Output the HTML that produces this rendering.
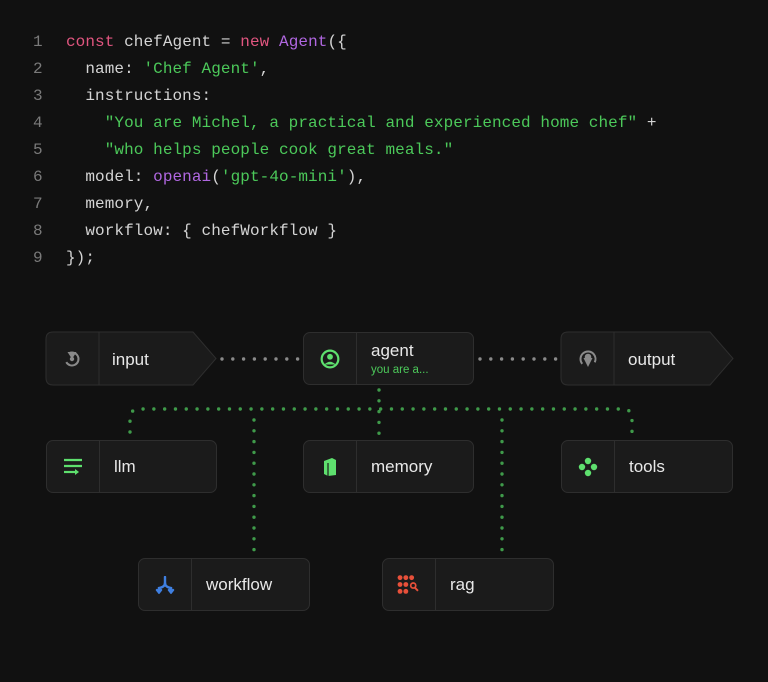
<!DOCTYPE html>
<html><head><meta charset="utf-8"><style>
*{margin:0;padding:0;box-sizing:border-box}
body{width:768px;height:682px;background:#111111;overflow:hidden;position:relative;font-family:"Liberation Sans",sans-serif}
.code{position:absolute;left:0;top:29px;font-family:"Liberation Mono",monospace;font-size:16px;letter-spacing:0.08px;line-height:27px;color:#d4d4d4;white-space:pre}
.ln{display:inline-block;width:66px;padding-left:33px;color:#7a7a7a}
.k{color:#e0557f}.f{color:#b067e0}.s{color:#4cc95a}
.node{position:absolute;height:53px;border:1px solid #2e2e2e;border-radius:7px;background:#1b1b1b;color:#e8e8e8;font-size:17px}
.node .ic{position:absolute;left:0;top:0;width:53px;height:100%;border-right:1px solid #2e2e2e;display:flex;align-items:center;justify-content:center}
.node .lb{position:absolute;left:67px;top:16px}
svg.l{position:absolute;left:0;top:0}
</style></head><body>
<div class="code"><span class="ln">1</span><span class="k">const</span> chefAgent = <span class="k">new</span> <span class="f">Agent</span>({
<span class="ln">2</span>  name: <span class="s">'Chef Agent'</span>,
<span class="ln">3</span>  instructions:
<span class="ln">4</span>    <span class="s">"You are Michel, a practical and experienced home chef"</span> +
<span class="ln">5</span>    <span class="s">"who helps people cook great meals."</span>
<span class="ln">6</span>  model: <span class="f">openai</span>(<span class="s">'gpt-4o-mini'</span>),
<span class="ln">7</span>  memory,
<span class="ln">8</span>  workflow: { chefWorkflow }
<span class="ln">9</span>});</div>

<svg class="l" width="768" height="682">
<g fill="none" stroke-linecap="round" stroke-width="3.4" stroke-dasharray="0 10.8">
<path d="M222 359 H298" stroke="#8a8a8a"/>
<path d="M480 359 H556" stroke="#8a8a8a"/>
<path d="M379 390 V438" stroke="#3f9a4a"/>
<path d="M130 432 V418 Q130 409 140 409 H622 Q632 409 632 418 V434" stroke="#3f9a4a"/>
<path d="M254 420 V556" stroke="#3f9a4a"/>
<path d="M502 420 V556" stroke="#3f9a4a"/>
</g>
<path d="M53 332 H193 L216 358.5 L193 385 H53 Q46 385 46 378 V339 Q46 332 53 332Z" fill="#1b1b1b" stroke="#2e2e2e"/>
<path d="M568 332 H710 L733 358.5 L710 385 H568 Q561 385 561 378 V339 Q561 332 568 332Z" fill="#1b1b1b" stroke="#2e2e2e"/>
<line x1="99" y1="332" x2="99" y2="385" stroke="#2e2e2e"/>
<line x1="614" y1="332" x2="614" y2="385" stroke="#2e2e2e"/>
<g transform="translate(72,359)"><circle r="6.5" fill="none" stroke="#8a8a8a" stroke-width="2" stroke-dasharray="30 11" transform="rotate(-115)"/><path d="M-4.5 -7 L4.5 -7 L0 0Z" fill="#8a8a8a"/><circle r="2.2" fill="#8a8a8a"/></g>
<g transform="translate(588,359)"><circle r="7.5" fill="none" stroke="#8a8a8a" stroke-width="2" stroke-dasharray="32 15" transform="rotate(140)"/><path d="M-4.5 -1 L4.5 -1 L0 8Z" fill="#8a8a8a"/><circle cy="-2" r="3.3" fill="#8a8a8a"/></g>
<text x="112" y="365" fill="#e8e8e8" font-size="17" font-family="Liberation Sans">input</text>
<text x="628" y="365" fill="#e8e8e8" font-size="17" font-family="Liberation Sans">output</text>
</svg>

<div class="node" style="left:303px;top:332px;width:171px">
<div class="ic"><svg width="20" height="20" viewBox="0 0 18 18"><circle cx="9" cy="9" r="7.5" fill="none" stroke="#5ee06e" stroke-width="2"/><circle cx="9" cy="7" r="2.6" fill="#5ee06e"/><path d="M4 14 Q9 9 14 14" fill="#5ee06e"/></svg></div>
<div class="lb" style="top:8px">agent<div style="font-size:11.5px;color:#4cc95a;margin-top:3px">you are a...</div></div></div>

<div class="node" style="left:46px;top:440px;width:171px">
<div class="ic"><svg width="20" height="18" viewBox="0 0 20 18"><g stroke="#5ee06e" stroke-width="2.2"><line x1="1" y1="2" x2="19" y2="2"/><line x1="1" y1="8" x2="19" y2="8"/><line x1="1" y1="14" x2="12" y2="14"/></g><path d="M12 11 L16 14 L12 17Z" fill="#5ee06e"/></svg></div>
<div class="lb">llm</div></div>

<div class="node" style="left:303px;top:440px;width:171px">
<div class="ic"><svg width="16" height="22" viewBox="0 0 16 20"><path d="M2 4 L10 1 L14 3 V18 L6 19 L2 17Z" fill="#5ee06e"/><path d="M6 6 V19" stroke="#1b1b1b" stroke-width="1.2"/></svg></div>
<div class="lb">memory</div></div>

<div class="node" style="left:561px;top:440px;width:172px">
<div class="ic"><svg width="20" height="20" viewBox="0 0 20 20" fill="#5ee06e"><circle cx="10" cy="4" r="3.2"/><circle cx="4" cy="10" r="3.2"/><circle cx="16" cy="10" r="3.2"/><circle cx="10" cy="16" r="3.2"/></svg></div>
<div class="lb">tools</div></div>

<div class="node" style="left:138px;top:558px;width:172px">
<div class="ic"><svg width="20" height="18" viewBox="0 0 20 18"><g fill="none" stroke="#3f7fe0" stroke-width="2.4" stroke-linecap="round"><path d="M10 1 V7 Q10 11 4 12 V16"/><path d="M10 7 Q10 11 16 12 V16"/><path d="M2 14 L4 16.5 L6 14"/><path d="M14 14 L16 16.5 L18 14"/></g></svg></div>
<div class="lb">workflow</div></div>

<div class="node" style="left:382px;top:558px;width:172px">
<div class="ic"><svg width="24" height="19" viewBox="0 0 22 18" fill="#e8503a"><circle cx="2.5" cy="2.5" r="2.3"/><circle cx="8" cy="2.5" r="2.3"/><circle cx="13.5" cy="2.5" r="2.3"/><circle cx="2.5" cy="9" r="2.3"/><circle cx="8" cy="9" r="2.3"/><circle cx="2.5" cy="15.5" r="2.3"/><circle cx="8" cy="15.5" r="2.3"/><circle cx="15" cy="10" r="2.4" fill="none" stroke="#e8503a" stroke-width="1.6"/><line x1="16.6" y1="12" x2="19.5" y2="15" stroke="#e8503a" stroke-width="1.8"/></svg></div>
<div class="lb">rag</div></div>
</body></html>
